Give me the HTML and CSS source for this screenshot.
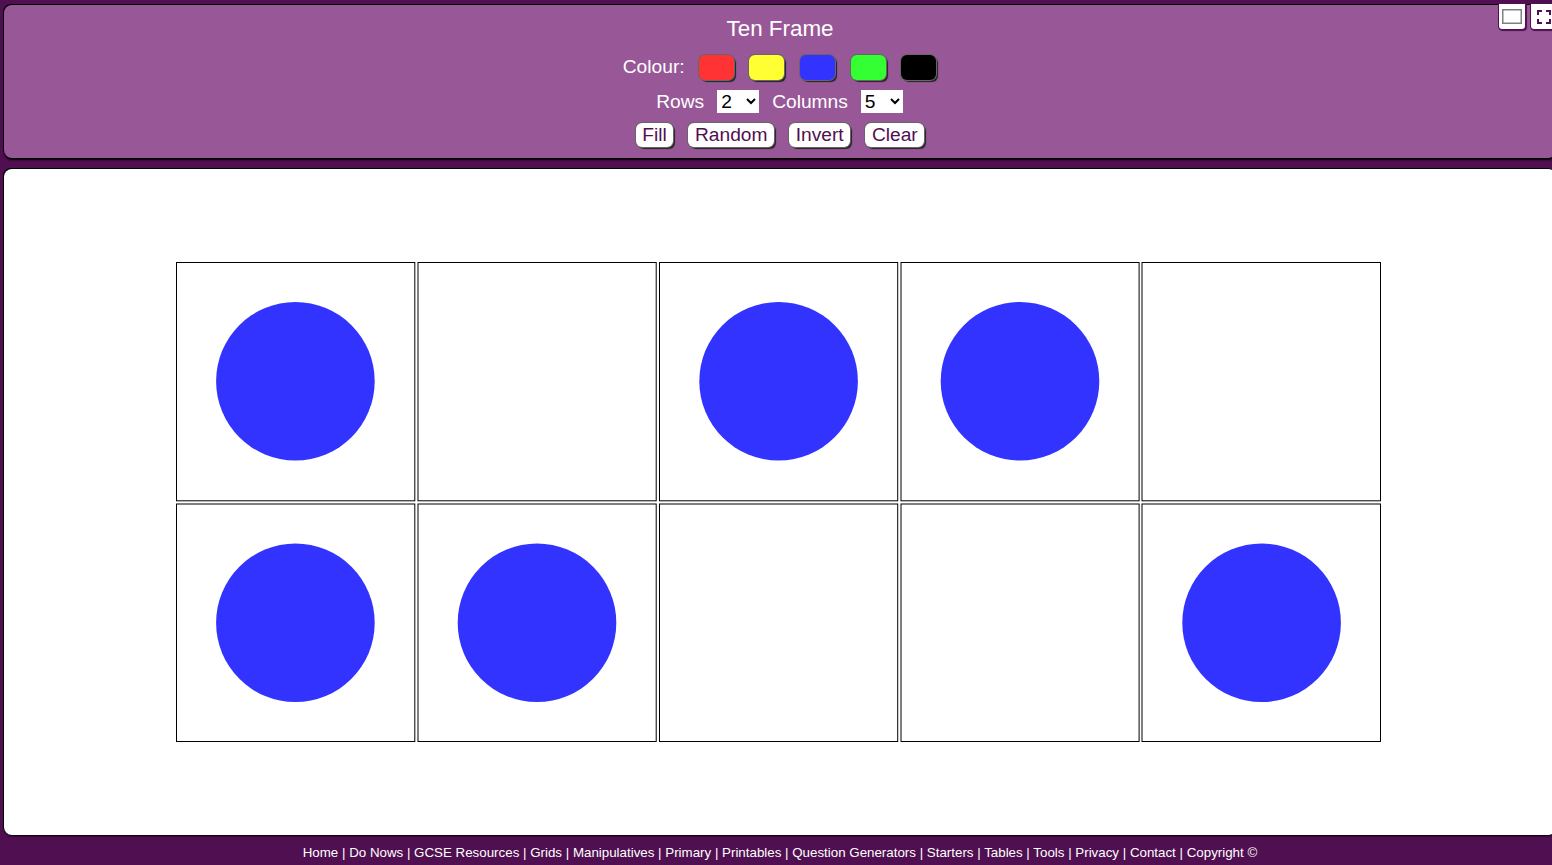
FILE: index.html
```html
<!DOCTYPE html>
<html lang="en">
<head>
  <meta charset="UTF-8">
  <meta name="viewport" content="width=device-width, initial-scale=1.0">
  <title>Ten Frame</title>
  <link rel="stylesheet" href="styles.css">
</head>
<body>

  <header class="panel">
    <h1>Ten Frame</h1>

    <div class="row colours">
      <span class="colour-label">Colour:</span>
      <button class="swatch red" aria-label="Red"></button>
      <button class="swatch yellow" aria-label="Yellow"></button>
      <button class="swatch blue" aria-label="Blue"></button>
      <button class="swatch green" aria-label="Green"></button>
      <button class="swatch black" aria-label="Black"></button>
    </div>

    <div class="row sizes">
      <label for="rows">Rows</label>
      <select id="rows"><option>1</option><option selected>2</option><option>3</option></select>
      <label for="columns">Columns</label>
      <select id="columns"><option>4</option><option selected>5</option><option>6</option></select>
    </div>

    <div class="row actions">
      <button class="action">Fill</button>
      <button class="action">Random</button>
      <button class="action">Invert</button>
      <button class="action">Clear</button>
    </div>

    <div class="corner-tools">
      <button class="tool" aria-label="Window">
        <svg width="20" height="15" viewBox="0 0 20 15"><rect x="0.75" y="0.75" width="18.5" height="13.5" fill="#fff" stroke="#808080" stroke-width="1.5"/></svg>
      </button>
      <button class="tool" aria-label="Fullscreen">
        <svg width="14" height="14" viewBox="0 0 14 14" fill="none" stroke="#500f50" stroke-width="2"><path d="M1 5V1H5M9 1H13V5M13 9V13H9M5 13H1V9"/></svg>
      </button>
    </div>
  </header>

  <main class="board">
    <svg class="frame" width="1206" height="481" viewBox="0 0 1206 481">
      <g fill="none" stroke="#000" stroke-width="1">
        <rect x="0.5" y="0.5" width="238.3" height="238.3"/>
        <rect x="242" y="0.5" width="238.2" height="238.3"/>
        <rect x="483.5" y="0.5" width="238.2" height="238.3"/>
        <rect x="725" y="0.5" width="238.1" height="238.3"/>
        <rect x="966" y="0.5" width="238.5" height="238.3"/>
        <rect x="0.5" y="242" width="238.3" height="237.5"/>
        <rect x="242" y="242" width="238.2" height="237.5"/>
        <rect x="483.5" y="242" width="238.2" height="237.5"/>
        <rect x="725" y="242" width="238.1" height="237.5"/>
        <rect x="966" y="242" width="238.5" height="237.5"/>
      </g>
      <g fill="#3333ff">
        <circle cx="119.4" cy="119.2" r="79.3"/>
        <circle cx="602.6" cy="119.2" r="79.3"/>
        <circle cx="844" cy="119.2" r="79.3"/>
        <circle cx="119.4" cy="360.8" r="79.3"/>
        <circle cx="361" cy="360.8" r="79.3"/>
        <circle cx="1085.6" cy="360.8" r="79.3"/>
      </g>
    </svg>
  </main>

  <footer class="links">
    <a href="#">Home</a> | <a href="#">Do Nows</a> | <a href="#">GCSE Resources</a> | <a href="#">Grids</a> | <a href="#">Manipulatives</a> | <a href="#">Primary</a> | <a href="#">Printables</a> | <a href="#">Question Generators</a> | <a href="#">Starters</a> | <a href="#">Tables</a> | <a href="#">Tools</a> | <a href="#">Privacy</a> | <a href="#">Contact</a> | Copyright &copy;
  </footer>

</body>
</html>
```

FILE: styles.css
```css
body {
  font-family: "Liberation Sans", Arial, sans-serif;
  background-color: #500f50;
  color: #fff;
  margin: 0;
  padding: 5px 0 0 4px;
  box-sizing: border-box;
  width: 1552px;
  height: 865px;
  overflow: hidden;
}

.panel {
  position: relative;
  box-sizing: border-box;
  width: 1552px;
  height: 153px;
  padding-top: 11px;
  background-color: #985898;
  border-radius: 8px;
  box-shadow: -1px -1px 0 #000, 0 2px 2px #000;
  text-align: center;
}

h1 {
  margin: 0 0 11px;
  font-size: 22.4px;
  line-height: 26px;
  font-weight: normal;
}

.row {
  display: flex;
  justify-content: center;
  align-items: center;
}

.colours {
  height: 28px;
  padding-right: 1px;
  font-size: 19.2px;
  gap: 15.67px;
  margin-bottom: 9px;
}

.colour-label {
  margin-right: -1.67px;
}

.swatch {
  width: 35px;
  height: 25px;
  padding: 0;
  border: none;
  border-radius: 6px;
  box-shadow: 0 0 0 1px #666, 2px 2px 1px 0 #222;
}

.red { background-color: #ff3333; }
.yellow { background-color: #ffff33; }
.blue { background-color: #3333ff; }
.green { background-color: #33ff33; }
.black { background-color: #000; }

.sizes {
  height: 23px;
  padding-right: 1px;
  font-size: 19.2px;
  gap: 13px;
  margin-bottom: 10px;
}

.sizes select {
  width: 42px;
  height: 23px;
  padding: 0;
  border: none;
  border-radius: 0;
  background-color: #fff;
  color: #000;
  font-family: inherit;
  font-size: 19.2px;
}

.actions {
  gap: 15.2px;
}

.action {
  height: 24px;
  padding: 0 6.5px;
  border: none;
  border-radius: 6px;
  background-color: #fff;
  color: #500f50;
  font-family: inherit;
  font-size: 19.2px;
  box-shadow: 0 0 0 1px #666, 2px 2px 1px 0 #222;
}

.corner-tools {
  position: absolute;
  top: -1px;
  left: 1495px;
  display: flex;
  gap: 6px;
}

.tool {
  display: flex;
  align-items: center;
  justify-content: center;
  width: 26px;
  height: 25px;
  padding: 0;
  border: none;
  border-radius: 0 0 3px 3px;
  background-color: #fff;
  box-shadow: 0 0 0 1px #500f50, 1px 1px 1px 1px #500f50;
}

.board {
  box-sizing: border-box;
  width: 1552px;
  height: 666px;
  margin-top: 11px;
  padding: 1px 2px 0 0;
  display: flex;
  align-items: center;
  justify-content: center;
  background-color: #fff;
  border-radius: 8px;
  box-shadow: -1px -1px 0 #000, 0 1px 2px #000;
}

.frame {
  display: block;
}

.links {
  margin-top: 9px;
  font-size: 13.33px;
  line-height: 18px;
  text-align: center;
  padding-left: 4px;
}

.links a {
  color: #fff;
  text-decoration: none;
}
```
